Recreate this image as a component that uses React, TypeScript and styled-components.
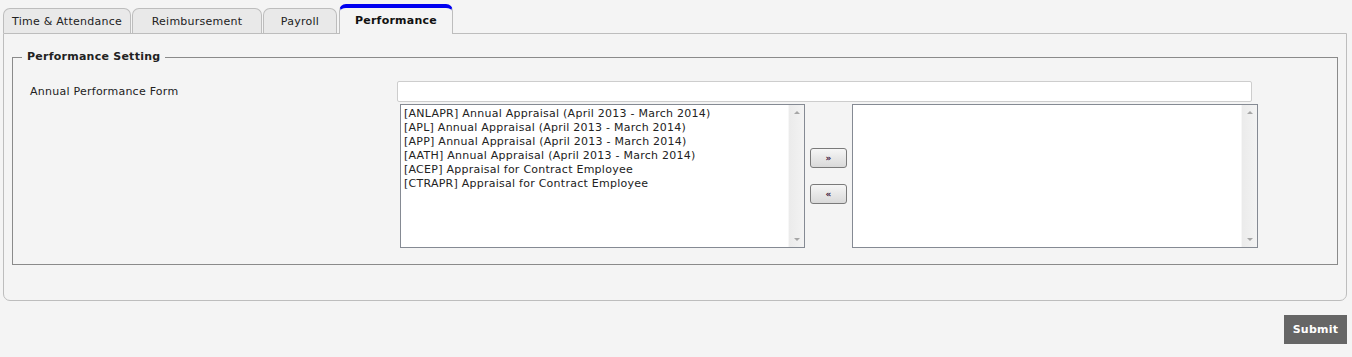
import React from 'react';
import styled, { createGlobalStyle } from 'styled-components';

const GlobalStyle = createGlobalStyle`
  html, body {
    margin: 0;
    padding: 0;
    background: #f4f4f4;
  }
  body {
    font-family: 'DejaVu Sans', Verdana, sans-serif;
    font-size: 11px;
    letter-spacing: 0.25px;
    color: #222;
  }
`;

interface TabProps {
  $width: number
  $active?: boolean
}

const Page = styled.div`
  padding: 0 5px 0 3px;
`;

const TabBar = styled.div`
  display: flex;
  align-items: flex-end;
  gap: 1px;
  height: 33px;
  position: relative;
  z-index: 2;
`;

const Tab = styled.div<TabProps>`
  box-sizing: border-box;
  width: ${p => p.$width}px;
  height: ${p => (p.$active ? 30 : 25)}px;
  margin-left: ${p => (p.$active ? 1 : 0)}px;
  margin-bottom: ${p => (p.$active ? -1 : 0)}px;
  display: flex;
  align-items: center;
  justify-content: center;
  padding-bottom: ${p => (p.$active ? 1 : 0)}px;

  background: ${p => (p.$active ? '#f4f4f4' : '#e9e9e9')};
  border: 1px solid #bdbdbd;
  border-bottom: none;
  border-top: ${p => (p.$active ? '4px solid #0000f0' : '1px solid #bdbdbd')};
  border-radius: 7px 7px 0 0;

  font-weight: ${p => (p.$active ? 'bold' : 'normal')};
  color: ${p => (p.$active ? '#111' : '#222')};
  white-space: nowrap;
`;

const Panel = styled.div`
  border: 1px solid #bdbdbd;
  border-radius: 0 0 7px 7px;
  padding: 16px 8px 35px 8px;
`;

const Fieldset = styled.fieldset`
  margin: 0;
  padding: 17px 17px 16px 17px;
  border: 1px solid #8a8a8a;
  min-width: 0;
`;

const Legend = styled.legend`
  margin-left: -8px;
  padding: 0 5px;
  font-weight: bold;
  font-size: 11px;
  line-height: 14px;
  color: #222;
`;

const FormRow = styled.div`
  display: grid;
  grid-template-columns: 367px 861px;
  align-items: start;
`;

const Label = styled.label`
  line-height: 21px;
  color: #222;
`;

const Controls = styled.div`
  display: flex;
  flex-direction: column;
  gap: 2px;
`;

const TextInput = styled.input`
  box-sizing: border-box;
  width: 855px;
  height: 21px;
  margin: 0;
  border: 1px solid #cdcdcd;
  border-radius: 2px;
  background: #fff;
  outline: none;
`;

const Transfer = styled.div`
  display: flex;
  align-items: center;
  gap: 5px;
  margin-left: 3px;
`;

const ListBox = styled.div<{ $width: number }>`
  box-sizing: border-box;
  width: ${p => p.$width}px;
  height: 144px;
  border: 1px solid #858a93;
  background: #fff;
  display: flex;
`;

const Options = styled.div`
  flex: 1;
  padding: 2px 3px;
`;

const Option = styled.div`
  line-height: 14px;
  white-space: nowrap;
  color: #222;
`;

const ScrollTrack = styled.div`
  width: 15px;
  background: linear-gradient(to right, #ebebeb, #f3f3f3);
  border-left: 1px solid #f7f7f7;
  display: flex;
  flex-direction: column;
  justify-content: space-between;
  align-items: center;
  padding: 6px 0;
`;

const Arrow = styled.span<{ $down?: boolean }>`
  width: 0;
  height: 0;
  border-left: 3px solid transparent;
  border-right: 3px solid transparent;
  ${p => (p.$down ? 'border-top: 3px solid #a6a6a6;' : 'border-bottom: 3px solid #a6a6a6;')}
`;

const MoveButtons = styled.div`
  display: flex;
  flex-direction: column;
  gap: 16px;
`;

const MoveButton = styled.button`
  box-sizing: border-box;
  width: 37px;
  height: 20px;
  margin: 0;
  padding: 0;
  border: 1px solid #7a7a7a;
  border-radius: 3px;
  background: linear-gradient(to bottom, #f6f6f6, #d9d9d9);
  font-family: 'DejaVu Sans', Verdana, sans-serif;
  font-size: 9px;
  font-weight: bold;
  line-height: 1;
  color: #402040;
  cursor: pointer;
`;

const Footer = styled.div`
  display: flex;
  justify-content: flex-end;
  margin-top: 14px;
`;

const SubmitButton = styled.button`
  width: 63px;
  height: 29px;
  border: none;
  background: #666666;
  color: #fff;
  font-family: 'DejaVu Sans', Verdana, sans-serif;
  font-weight: bold;
  font-size: 11px;
  letter-spacing: 0.25px;
  cursor: pointer;
`;

const tabs = [
  { label: 'Time & Attendance', width: 128 },
  { label: 'Reimbursement', width: 130 },
  { label: 'Payroll', width: 74 },
  { label: 'Performance', width: 114, active: true },
];

const forms = [
  '[ANLAPR] Annual Appraisal (April 2013 - March 2014)',
  '[APL] Annual Appraisal (April 2013 - March 2014)',
  '[APP] Annual Appraisal (April 2013 - March 2014)',
  '[AATH] Annual Appraisal (April 2013 - March 2014)',
  '[ACEP] Appraisal for Contract Employee',
  '[CTRAPR] Appraisal for Contract Employee',
];

const Scroll = () => (
  <ScrollTrack>
    <Arrow />
    <Arrow $down />
  </ScrollTrack>
);

export default function App() {
  return (
    <Page>
      <GlobalStyle />
      <TabBar>
        {tabs.map(t => (
          <Tab key={t.label} $width={t.width} $active={t.active}>
            {t.label}
          </Tab>
        ))}
      </TabBar>
      <Panel>
        <Fieldset>
          <Legend>Performance Setting</Legend>
          <FormRow>
            <Label>Annual Performance Form</Label>
            <Controls>
              <TextInput type="text" />
              <Transfer>
                <ListBox $width={405}>
                  <Options>
                    {forms.map(f => (
                      <Option key={f}>{f}</Option>
                    ))}
                  </Options>
                  <Scroll />
                </ListBox>
                <MoveButtons>
                  <MoveButton>»</MoveButton>
                  <MoveButton>«</MoveButton>
                </MoveButtons>
                <ListBox $width={406}>
                  <Options />
                  <Scroll />
                </ListBox>
              </Transfer>
            </Controls>
          </FormRow>
        </Fieldset>
      </Panel>
      <Footer>
        <SubmitButton>Submit</SubmitButton>
      </Footer>
    </Page>
  );
}
